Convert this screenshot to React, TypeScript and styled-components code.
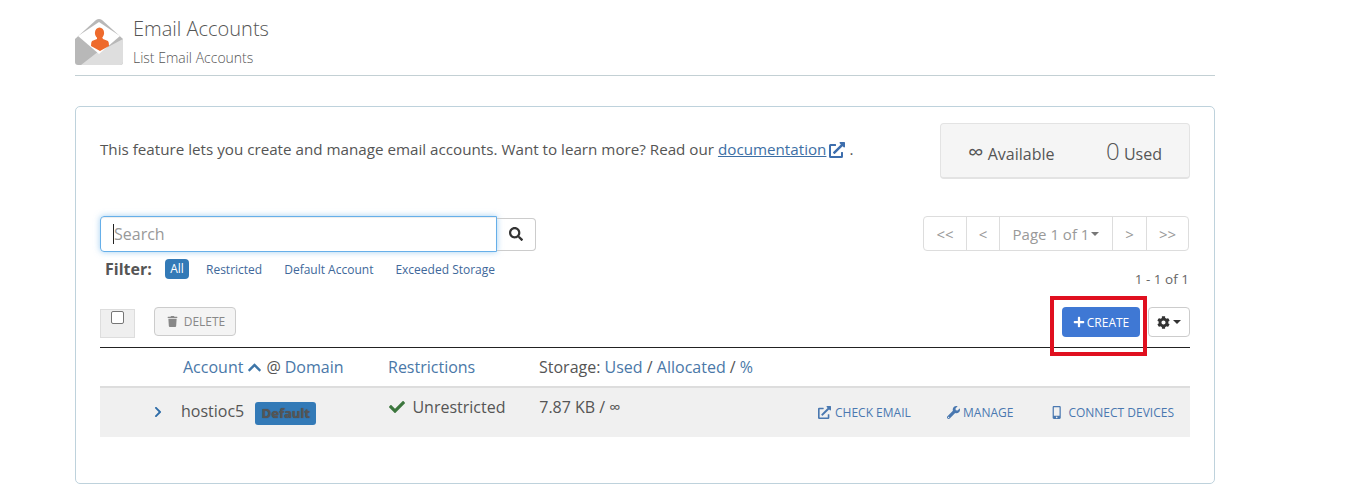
import React from 'react';
import styled, { createGlobalStyle } from 'styled-components';
import { FaCheck, FaChevronRight, FaChevronUp, FaCog, FaExternalLinkAlt, FaMobileAlt, FaPlus, FaSearch, FaTrash, FaWrench } from 'react-icons/fa';

const GlobalStyle = createGlobalStyle`
    * { box-sizing: border-box; }
    html, body { margin: 0; background: #fff; }
    body {
        font-family: "Open Sans", "Liberation Sans", sans-serif;
        color: #555;
        overflow: hidden;
    }
`;

const LogoIcon = () => (
    <svg width="48" height="48" viewBox="0 0 48 48">
        <path d="M0 21 L21 2 Q24 0 27 2 L48 21 V44 Q48 47 45 47 H3 Q0 47 0 44 Z" fill="#b8b8b8" />
        <path d="M48 21 V44 Q48 47 45 47 H6 L24 33 L33 29 Z" fill="#dedede" />
        <path d="M3 18 L24 4 L45 18 L24 36 Z" fill="#fff" />
        <ellipse cx="24.5" cy="15" rx="4.6" ry="5.5" fill="#ee6a2c" />
        <path d="M22 19 h5 l1 2 l5 2 Q34 24 34 28 L25 33 L16 28 Q16 24 17 23 l5-2 Z" fill="#ee6a2c" />
    </svg>
);

const EmailAccounts = () => (
    <Page>
        <GlobalStyle />
        <Header>
            <LogoIcon />
            <HeaderText>
                <PageTitle>Email Accounts</PageTitle>
                <PageSubtitle>List Email Accounts</PageSubtitle>
            </HeaderText>
        </Header>
        <Panel>
            <IntroRow>
                <IntroText>
                    This feature lets you create and manage email accounts. Want to learn more? Read our{' '}
                    <DocLink>documentation</DocLink>
                    <DocIcon><FaExternalLinkAlt /></DocIcon> .
                </IntroText>
                <StatsBox>
                    <Stat><Infinity>∞</Infinity> Available</Stat>
                    <Stat><Count>0</Count> Used</Stat>
                </StatsBox>
            </IntroRow>
            <SearchRow>
                <SearchColumn>
                    <SearchGroup>
                        <SearchInput>
                            <Caret />
                            <Placeholder>Search</Placeholder>
                        </SearchInput>
                        <SearchButton><FaSearch /></SearchButton>
                    </SearchGroup>
                    <FilterRow>
                        <FilterLabel>Filter:</FilterLabel>
                        <FilterPill>All</FilterPill>
                        <FilterLink>Restricted</FilterLink>
                        <FilterLink>Default Account</FilterLink>
                        <FilterLink>Exceeded Storage</FilterLink>
                    </FilterRow>
                </SearchColumn>
                <PagerColumn>
                    <Pager>
                        <PagerItem $width={42}>&lt;&lt;</PagerItem>
                        <PagerItem $width={33}>&lt;</PagerItem>
                        <PagerItem $width={113}>Page 1 of 1<SmallCaret /></PagerItem>
                        <PagerItem $width={34}>&gt;</PagerItem>
                        <PagerItem $width={42}>&gt;&gt;</PagerItem>
                    </Pager>
                    <PageCount>1 - 1 of 1</PageCount>
                </PagerColumn>
            </SearchRow>
            <Toolbar>
                <ToolbarLeft>
                    <CheckCell><CheckBox /></CheckCell>
                    <DeleteButton><FaTrash /> DELETE</DeleteButton>
                </ToolbarLeft>
                <ToolbarRight>
                    <CreateHighlight>
                        <CreateButton><FaPlus /> CREATE</CreateButton>
                    </CreateHighlight>
                    <GearButton><FaCog /><DarkCaret /></GearButton>
                </ToolbarRight>
            </Toolbar>
            <TableHead>
                <AccountHead>
                    <HeadLink>Account</HeadLink>
                    <SortIcon><FaChevronUp /></SortIcon>
                    <span>@</span>
                    <HeadLink>Domain</HeadLink>
                </AccountHead>
                <RestrictionHead><HeadLink>Restrictions</HeadLink></RestrictionHead>
                <div>
                    Storage: <HeadLink>Used</HeadLink> / <HeadLink>Allocated</HeadLink> / <HeadLink>%</HeadLink>
                </div>
            </TableHead>
            <AccountRow>
                <Expander><FaChevronRight /></Expander>
                <AccountName>hostioc5</AccountName>
                <DefaultBadge>Default</DefaultBadge>
                <RestrictionCell><GreenCheck><FaCheck /></GreenCheck> Unrestricted</RestrictionCell>
                <StorageCell>7.87 KB / ∞</StorageCell>
                <RowActions>
                    <RowAction $width={129} $gap={4}><FaExternalLinkAlt /> CHECK EMAIL</RowAction>
                    <RowAction $width={105} $gap={3}><FaWrench /> MANAGE</RowAction>
                    <RowAction $width={122} $gap={7}><FaMobileAlt /> CONNECT DEVICES</RowAction>
                </RowActions>
            </AccountRow>
        </Panel>
    </Page>
);

export default EmailAccounts;

const Page = styled.div`
    width: 1140px;
    margin-left: 75px;
    padding-top: 18px;
`;

const Header = styled.header`
    display: flex;
    gap: 10px;
    height: 58px;
    border-bottom: 1px solid #c3d0d4;
`;

const HeaderText = styled.div`
    display: flex;
    flex-direction: column;
`;

const PageTitle = styled.h1`
    margin: 0;
    font-size: 20px;
    line-height: 22px;
    font-weight: 300;
    color: #555;
`;

const PageSubtitle = styled.div`
    margin-top: 9px;
    font-size: 14px;
    line-height: 18px;
    font-weight: 300;
    color: #555;
`;

const Panel = styled.section`
    height: 378px;
    margin-top: 30px;
    padding: 16px 24px 0;
    border: 1px solid #bed2dc;
    border-radius: 5px;
`;

const IntroRow = styled.div`
    display: flex;
    justify-content: space-between;
`;

const IntroText = styled.p`
    margin: 16px 0 0;
    font-size: 15.2px;
    line-height: 20px;
    color: #555;
`;

const DocLink = styled.a`
    color: #3d6fa5;
    text-decoration: underline;
`;

const DocIcon = styled.span`
    margin-left: 3px;
    color: #3d6ead;
    font-size: 16px;

    svg {
        vertical-align: -3px;
    }
`;

const StatsBox = styled.div`
    display: flex;
    align-items: baseline;
    justify-content: space-between;
    width: 250px;
    height: 56px;
    padding: 15px 27px 0;
    background: #f5f5f5;
    border: 1px solid #e3e3e3;
    border-bottom-width: 2px;
    border-radius: 4px;
    font-size: 16px;
`;

const Stat = styled.div`
    white-space: nowrap;
`;

const Infinity = styled.span`
    font-size: 22px;
    line-height: 24px;
`;

const Count = styled.span`
    font-size: 24px;
    line-height: 24px;
    font-weight: 300;
`;

const SearchRow = styled.div`
    display: flex;
    justify-content: space-between;
    height: 91px;
    margin-top: 37px;
`;

const SearchColumn = styled.div`
    width: 436px;
`;

const SearchGroup = styled.div`
    display: flex;
    align-items: center;
`;

const SearchInput = styled.div`
    display: flex;
    align-items: center;
    width: 397px;
    height: 36px;
    padding-left: 12px;
    border: 1px solid #66afe9;
    border-radius: 4px 0 0 4px;
    box-shadow: inset 0 1px 1px rgba(0, 0, 0, 0.075), 0 0 6px rgba(102, 175, 233, 0.6);
`;

const Caret = styled.span`
    width: 1px;
    height: 20px;
    background: #222;
`;

const Placeholder = styled.span`
    font-size: 16px;
    color: #999;
`;

const SearchButton = styled.div`
    display: flex;
    align-items: center;
    justify-content: center;
    width: 39px;
    height: 33px;
    border: 1px solid #ccc;
    border-left: 0;
    border-radius: 0 4px 4px 0;
    font-size: 14px;
    color: #333;
`;

const FilterRow = styled.div`
    display: flex;
    align-items: center;
    margin: 7px 0 0 5px;
    height: 20px;
`;

const FilterLabel = styled.span`
    width: 60px;
    font-size: 16px;
    font-weight: 700;
    color: #555;
`;

const FilterPill = styled.span`
    width: 24px;
    height: 20px;
    margin-right: 17px;
    border-radius: 4px;
    background: #337ab7;
    color: #fff;
    font-size: 12px;
    line-height: 20px;
    text-align: center;
`;

const FilterLink = styled.span`
    margin-right: 22px;
    font-size: 12px;
    color: #40689a;
`;

const PagerColumn = styled.div`
    display: flex;
    flex-direction: column;
    align-items: flex-end;
    padding-right: 1px;
`;

const Pager = styled.div`
    display: flex;
    height: 35px;
    border: 1px solid #ddd;
    border-radius: 4px;
`;

const PagerItem = styled.div<{ $width: number }>`
    display: flex;
    align-items: center;
    justify-content: center;
    width: ${(p) => p.$width}px;
    font-size: 15px;
    color: #999;

    & + & {
        border-left: 1px solid #ddd;
    }
`;

const SmallCaret = styled.span`
    margin-left: 2px;
    border-top: 4px solid #777;
    border-left: 4px solid transparent;
    border-right: 4px solid transparent;
`;

const PageCount = styled.div`
    margin-top: 19px;
    font-size: 13.5px;
    line-height: 18px;
    color: #666;
`;

const Toolbar = styled.div`
    display: flex;
    justify-content: space-between;
    align-items: flex-start;
    height: 41px;
    border-bottom: 1px solid #222;
`;

const ToolbarLeft = styled.div`
    display: flex;
    align-items: flex-start;
    gap: 19px;
`;

const CheckCell = styled.div`
    display: flex;
    justify-content: center;
    width: 35px;
    height: 29px;
    margin-top: 2px;
    background: #efefef;
    border: 1px solid #ddd;
`;

const CheckBox = styled.span`
    width: 13px;
    height: 13px;
    margin-top: 1px;
    background: #fff;
    border: 1px solid #767676;
    border-radius: 2px;
`;

const DeleteButton = styled.div`
    display: flex;
    align-items: center;
    justify-content: center;
    gap: 6px;
    width: 82px;
    height: 29px;
    padding-left: 2px;
    background: #f4f4f4;
    border: 1px solid #ccc;
    border-radius: 4px;
    font-size: 12px;
    color: #888;

    svg {
        font-size: 11px;
    }
`;

const ToolbarRight = styled.div`
    display: flex;
    align-items: flex-start;
    gap: 8px;
`;

const CreateHighlight = styled.div`
    position: relative;

    &::after {
        content: '';
        position: absolute;
        left: -12px;
        right: -7px;
        top: -11px;
        height: 52px;
        border: 4px solid #e0101f;
        pointer-events: none;
    }
`;

const CreateButton = styled.div`
    display: flex;
    align-items: center;
    justify-content: center;
    gap: 2px;
    width: 78px;
    height: 30px;
    background: #3f78d4;
    border-radius: 4px;
    color: #fff;
    font-size: 12px;

    svg {
        font-size: 12px;
    }
`;

const GearButton = styled.div`
    display: flex;
    align-items: center;
    justify-content: center;
    gap: 3px;
    width: 42px;
    height: 30px;
    border: 1px solid #ccc;
    border-radius: 4px;
    color: #333;
    font-size: 13px;
`;

const DarkCaret = styled.span`
    border-top: 4px solid #333;
    border-left: 4px solid transparent;
    border-right: 4px solid transparent;
`;

const TableHead = styled.div`
    display: flex;
    align-items: center;
    height: 38px;
    padding-left: 83px;
    font-size: 16px;
    color: #555;
`;

const AccountHead = styled.div`
    display: flex;
    align-items: center;
    gap: 4px;
    width: 205px;
`;

const RestrictionHead = styled.div`
    width: 151px;
`;

const HeadLink = styled.span`
    color: #4a78a8;
`;

const SortIcon = styled.span`
    display: flex;
    color: #3d75a8;
    font-size: 15px;
`;

const AccountRow = styled.div`
    display: flex;
    align-items: flex-start;
    height: 51px;
    border-top: 2px solid #ddd;
    background: #f0f0f0;
    color: #555;
    font-size: 16px;
`;

const Expander = styled.span`
    margin: 17px 1px 0 52px;
    color: #2f6da8;
    font-size: 12px;
`;

const AccountName = styled.span`
    margin: 12px 0 0 16px;
`;

const DefaultBadge = styled.span`
    width: 61px;
    height: 23px;
    margin: 14px 0 0 11px;
    border-radius: 3px;
    background: #337ab7;
    color: #555;
    font-size: 13px;
    font-weight: 700;
    line-height: 23px;
    text-align: center;
    text-shadow: 0 0 1px #444;
`;

const RestrictionCell = styled.span`
    width: 150px;
    margin: 8px 0 0 73px;
`;

const GreenCheck = styled.span`
    margin-right: 3px;
    color: #3c763d;
    font-size: 16px;

    svg {
        vertical-align: -2px;
    }
`;

const StorageCell = styled.span`
    margin-top: 8px;
`;

const RowActions = styled.div`
    display: flex;
    align-items: center;
    height: 49px;
    margin-left: auto;
    padding-right: 16px;
`;

const RowAction = styled.span<{ $width: number; $gap: number }>`
    display: flex;
    align-items: center;
    gap: ${(p) => p.$gap}px;
    width: ${(p) => p.$width}px;
    color: #4a78b0;
    font-size: 12px;
    white-space: nowrap;

    svg {
        font-size: 13px;
    }
`;
